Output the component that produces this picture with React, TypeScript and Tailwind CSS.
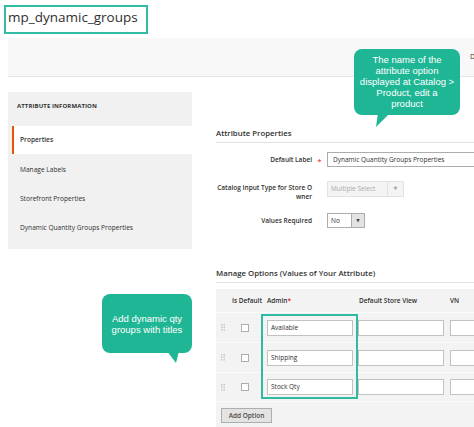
import React from "react"

const teal = "bg-[#1fb696]"

function Handle() {
  return (
    <svg width="4" height="7" viewBox="0 0 4 7" className="block">
      {[0, 2.5, 5].map((y) => (
        <g key={y}>
          <rect x="0" y={y} width="1.5" height="1.5" fill="#c8c8c8" />
          <rect x="2.5" y={y} width="1.5" height="1.5" fill="#c8c8c8" />
        </g>
      ))}
    </svg>
  )
}

const sideItems = ["Manage Labels", "Storefront Properties", "Dynamic Quantity Groups Properties"]
const options = ["Available", "Shipping", "Stock Qty"]

export default function App() {
  return (
    <div
      className="relative w-[474px] h-[427px] overflow-hidden bg-white text-[#303030]"
      style={{ fontFamily: '"Open Sans", "DejaVu Sans", sans-serif' }}
    >
      {/* page title */}
      <div className="pt-[5px] pl-[4px]">
        <div className="w-[144px] h-[29px] border-2 border-[#33bca5] pl-[2px] flex items-center">
          <span className="text-[13.5px] leading-none text-[#303030] -mt-[3px]">mp_dynamic_groups</span>
        </div>
      </div>

      {/* action bar */}
      <div className="mt-[4px] ml-[8px] h-[39px] bg-[#f8f8f8] border-b border-[#e6e6e6] flex items-center">
        <span className="ml-[462px] text-[7px]">D</span>
      </div>

      <div className="mt-[15px] flex">
        {/* sidebar */}
        <div className="shrink-0 ml-[8px] w-[184px] h-[157px] bg-[#f1f1f1] flex flex-col">
          <div className="h-[28px] pl-[9px] flex items-center text-[6px] font-bold uppercase tracking-[0.1px]">
            Attribute Information
          </div>
          <div className="mt-[6px] ml-[4px] h-[28px] bg-white border-l-2 border-[#eb5202] pl-[6px] flex items-center text-[6.6px] font-semibold">
            Properties
          </div>
          <div className="mt-[1px] flex flex-col">
            {sideItems.map((s) => (
              <div key={s} className="h-[29px] pl-[12px] flex items-center text-[6.6px]">
                {s}
              </div>
            ))}
          </div>
        </div>

        {/* main */}
        <div className="shrink-0 ml-[24px] w-[270px]">
          <div className="mt-[36px] h-[15px] pb-[4px] border-b border-[#e3e3e3] text-[7.8px] leading-[10px] font-semibold whitespace-nowrap">
            Attribute Properties
          </div>

          <div className="mt-[9px] flex items-center h-[15px]">
            <div className="shrink-0 w-[96px] text-right text-[6.5px] font-semibold">Default Label</div>
            <div className="shrink-0 w-[15px] text-center text-[8px] text-[#e22626] leading-none pt-[2px]">*</div>
            <div className="shrink-0 w-[160px] h-[15px] border border-[#adadad] bg-white flex items-center pl-[5px] text-[6.5px] whitespace-nowrap">
              Dynamic Quantity Groups Properties
            </div>
          </div>

          <div className="mt-[14px] flex items-start h-[20px]">
            <div className="shrink-0 w-[96px] pt-[2px] text-right text-[6.5px] leading-[9px] font-semibold">
              <div className="whitespace-nowrap">Catalog Input Type for Store O</div>
              <div>wner</div>
            </div>
            <div className="shrink-0 w-[15px]" />
            <div className="shrink-0 w-[77px] h-[16px] border border-[#e2e2e2] bg-[#f4f4f4] flex items-center text-[6.5px] text-[#a9a9a9]">
              <span className="flex-1 pl-[3px] whitespace-nowrap">Multiple Select</span>
              <span className="w-[16px] h-full border-l border-[#e2e2e2] flex items-center justify-center text-[5px]">▼</span>
            </div>
          </div>

          <div className="mt-[12px] flex items-center h-[15px]">
            <div className="shrink-0 w-[96px] text-right text-[6.5px] font-semibold">Values Required</div>
            <div className="shrink-0 w-[15px]" />
            <div className="shrink-0 w-[38px] h-[15px] border border-[#adadad] bg-white flex items-center text-[6.5px]">
              <span className="flex-1 pl-[3px]">No</span>
              <span className="w-[13px] h-full bg-[#e3e3e3] border-l border-[#adadad] flex items-center justify-center text-[4.5px] text-[#514943]">▼</span>
            </div>
          </div>

          <div className="mt-[40px] h-[15px] pb-[4px] border-b border-[#e3e3e3] text-[7.8px] leading-[10px] font-semibold whitespace-nowrap">
            Manage Options (Values of Your Attribute)
          </div>

          {/* options table */}
          <div className="mt-[6px] bg-[#f3f3f3]">
            <div className="h-[24px] flex items-center text-[6.5px] font-semibold border-b border-[#fbfbfb]">
              <div className="shrink-0 w-[14px]" />
              <div className="shrink-0 w-[34px] text-center whitespace-nowrap">Is Default</div>
              <div className="shrink-0 w-[92px] pl-[3px]">
                Admin<span className="text-[#e22626]">*</span>
              </div>
              <div className="shrink-0 w-[91px] pl-[3px] whitespace-nowrap">Default Store View</div>
              <div className="shrink-0 pl-[3px]">VN</div>
            </div>
            {options.map((o, i) => (
              <div
                key={o}
                className={`${i === 2 ? "h-[29px]" : "h-[30px]"} flex items-center border-b border-[#fbfbfb]`}
              >
                <div className="shrink-0 w-[14px] pl-[5px]">
                  <Handle />
                </div>
                <div className="shrink-0 w-[34px] pl-[11px]">
                  <div className="w-[8px] h-[8px] bg-white border border-[#adadad]" />
                </div>
                <div className="shrink-0 w-[92px] pl-[3px]">
                  <div className="w-[86px] h-[16px] bg-white border border-[#c2c2c2] flex items-center pl-[3px] text-[6.5px]">
                    {o}
                  </div>
                </div>
                <div className="shrink-0 w-[91px] pl-[2px]">
                  <div className="w-[86px] h-[16px] bg-white border border-[#c2c2c2]" />
                </div>
                <div className="shrink-0 pl-[3px]">
                  <div className="w-[60px] h-[16px] bg-white border border-[#c2c2c2]" />
                </div>
              </div>
            ))}
            <div className="h-[30px] pt-[6px] pl-[5px]">
              <div className="w-[51px] h-[15px] bg-[#e3e3e3] border border-[#adadad] flex items-center justify-center text-[6.5px] font-semibold text-[#514943]">
                Add Option
              </div>
            </div>
          </div>
        </div>
      </div>

      {/* annotations */}
      <div className="absolute left-[261px] top-[314px] w-[97px] h-[85px] border-2 border-[#2fbaa2]" />

      <div
        className={`absolute left-[354px] top-[49px] w-[106px] h-[66px] rounded-[8px] ${teal} pt-[5px] text-center text-white text-[9.5px] leading-[11px]`}
        style={{ fontFamily: '"Liberation Sans", Arial, sans-serif' }}
      >
        The name of the
        <br />
        attribute option
        <br />
        displayed at Catalog &gt;
        <br />
        Product, edit a
        <br />
        product
      </div>
      <svg className="absolute left-[370px] top-[113px]" width="24" height="16" viewBox="0 0 24 16">
        <polygon points="8,0 20,0 6,14" fill="#1fb696" />
      </svg>

      <div
        className={`absolute left-[102px] top-[294px] w-[90px] h-[59px] rounded-[8px] ${teal} flex flex-col items-center justify-center text-white text-[9.5px] leading-[11px]`}
        style={{ fontFamily: '"Liberation Sans", Arial, sans-serif' }}
      >
        <span>Add dynamic qty</span>
        <span>groups with titles</span>
      </div>
      <svg className="absolute left-[164px] top-[351px]" width="16" height="14" viewBox="0 0 16 14">
        <polygon points="3,0 15,0 12,12" fill="#1fb696" />
      </svg>
    </div>
  )
}
